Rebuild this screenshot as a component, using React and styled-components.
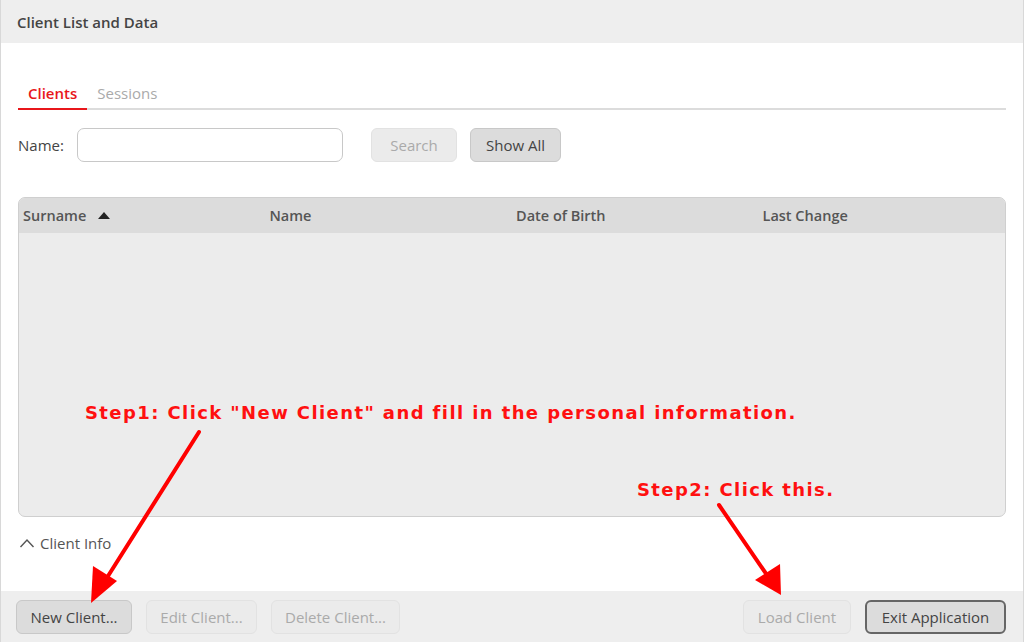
import React from 'react';
import styled, { createGlobalStyle } from 'styled-components';

const Global = createGlobalStyle`
  html, body { margin: 0; padding: 0; background: #fff; }
  body { font-family: "Open Sans", "Noto Sans", sans-serif; color: #444; }
  * { box-sizing: border-box; }
`;

const Window = styled.div`
  position: relative;
  width: 1024px;
  height: 642px;
  display: flex;
  flex-direction: column;
  border-left: 1px solid #d8d8d8;
  border-right: 1px solid #d8d8d8;
  overflow: hidden;
`;

const TitleBar = styled.div`
  height: 43px;
  background: #eeeeee;
  display: flex;
  align-items: center;
  padding-left: 16px;
  font-size: 15px;
  font-weight: 600;
  color: #444;
`;

const Body = styled.div`
  flex: 1;
  display: flex;
  flex-direction: column;
  padding: 34px 17px 0 17px;
`;

const Tabs = styled.div`
  display: flex;
  border-bottom: 2px solid #dcdcdc;
  height: 33px;
`;

const Tab = styled.div`
  padding: 6px 10px 0 10px;
  font-size: 15px;
  color: ${p => (p.$active ? '#e8161b' : '#aaa')};
  font-weight: ${p => (p.$active ? 600 : 400)};
  border-bottom: 2px solid ${p => (p.$active ? '#e8161b' : 'transparent')};
  margin-bottom: -2px;
`;

const SearchRow = styled.div`
  display: flex;
  align-items: center;
  margin-top: 18px;
  height: 34px;
`;

const Label = styled.span`
  font-size: 15px;
  color: #444;
  width: 59px;
`;

const Input = styled.input`
  width: 266px;
  height: 34px;
  border: 1px solid #c8c8c8;
  border-radius: 7px;
  background: #fff;
  outline: none;
`;

const Button = styled.button`
  height: ${p => p.$h || 34}px;
  width: ${p => (p.$w ? `${p.$w}px` : 'auto')};
  padding: 0 10px;
  margin-left: ${p => p.$ml || 0}px;
  border-radius: 6px;
  font-family: inherit;
  font-size: 15px;
  background: ${p => (p.$disabled ? '#ebebeb' : '#dcdcdc')};
  color: ${p => (p.$disabled ? '#aaa' : '#444')};
  border: ${p => (p.$strong ? '2px solid #666' : p.$disabled ? '1px solid #e2e2e2' : '1px solid #c8c8c8')};
`;

const Table = styled.div`
  margin-top: 35px;
  height: 320px;
  border: 1px solid #cfcfcf;
  border-radius: 7px;
  overflow: hidden;
  background: #ececec;
  display: flex;
  flex-direction: column;
`;

const HeadRow = styled.div`
  display: grid;
  grid-template-columns: repeat(4, 1fr);
  height: 35px;
  background: #dcdcdc;
  align-items: center;
`;

const HeadCell = styled.div`
  padding-left: 4px;
  font-size: 14.5px;
  font-weight: 600;
  color: #555;
  display: flex;
  align-items: center;
  gap: 12px;
`;

const SortUp = styled.span`
  width: 0;
  height: 0;
  border-left: 6px solid transparent;
  border-right: 6px solid transparent;
  border-bottom: 7px solid #222;
`;

const Disclosure = styled.div`
  margin-top: 16px;
  display: flex;
  align-items: center;
  gap: 5px;
  font-size: 15px;
  color: #555;
  padding-left: 1px;
`;

const BottomBar = styled.div`
  height: 51px;
  background: #eeeeee;
  display: flex;
  align-items: center;
  padding: 0 17px 0 15px;
  gap: 14px;
`;

const Spacer = styled.div`
  flex: 1;
`;

const Note = styled.div`
  position: absolute;
  left: ${p => p.$x}px;
  top: ${p => p.$y}px;
  font-family: "Comic Sans MS", "DejaVu Sans", sans-serif;
  font-weight: bold;
  font-size: 18px;
  letter-spacing: 1.4px;
  color: #ff1010;
  white-space: nowrap;
`;

const Overlay = styled.svg`
  position: absolute;
  left: 0;
  top: 0;
  pointer-events: none;
`;

export default function App() {
  return (
    <>
      <Global />
      <Window>
        <TitleBar>Client List and Data</TitleBar>
        <Body>
          <Tabs>
            <Tab $active>Clients</Tab>
            <Tab>Sessions</Tab>
          </Tabs>
          <SearchRow>
            <Label>Name:</Label>
            <Input />
            <Button $disabled $ml={28} $w={86}>Search</Button>
            <Button $ml={13} $w={91}>Show All</Button>
          </SearchRow>
          <Table>
            <HeadRow>
              <HeadCell>Surname <SortUp /></HeadCell>
              <HeadCell>Name</HeadCell>
              <HeadCell>Date of Birth</HeadCell>
              <HeadCell>Last Change</HeadCell>
            </HeadRow>
          </Table>
          <Disclosure>
            <svg width="16" height="12" viewBox="0 0 16 12">
              <path d="M1.5 10 L8 3 L14.5 10" fill="none" stroke="#555" strokeWidth="1.4" />
            </svg>
            Client Info
          </Disclosure>
          <Spacer />
        </Body>
        <BottomBar>
          <Button $w={116}>New Client...</Button>
          <Button $disabled $w={111}>Edit Client...</Button>
          <Button $disabled $w={129}>Delete Client...</Button>
          <Spacer />
          <Button $disabled $w={108}>Load Client</Button>
          <Button $strong $w={141}>Exit Application</Button>
        </BottomBar>

        <Note $x={84} $y={402}>Step1: Click "New Client" and fill in the personal information.</Note>
        <Note $x={636} $y={479}>Step2: Click this.</Note>
        <Overlay width="1024" height="642" viewBox="0 0 1024 642">
          <line x1="198" y1="432" x2="102" y2="584" stroke="#ff0000" strokeWidth="4" strokeLinecap="round" />
          <polygon points="90,603 92,566 116,581" fill="#ff0000" />
          <line x1="718" y1="505" x2="768" y2="578" stroke="#ff0000" strokeWidth="4" strokeLinecap="round" />
          <polygon points="780,595 754,580 779,564" fill="#ff0000" />
        </Overlay>
      </Window>
    </>
  );
}
